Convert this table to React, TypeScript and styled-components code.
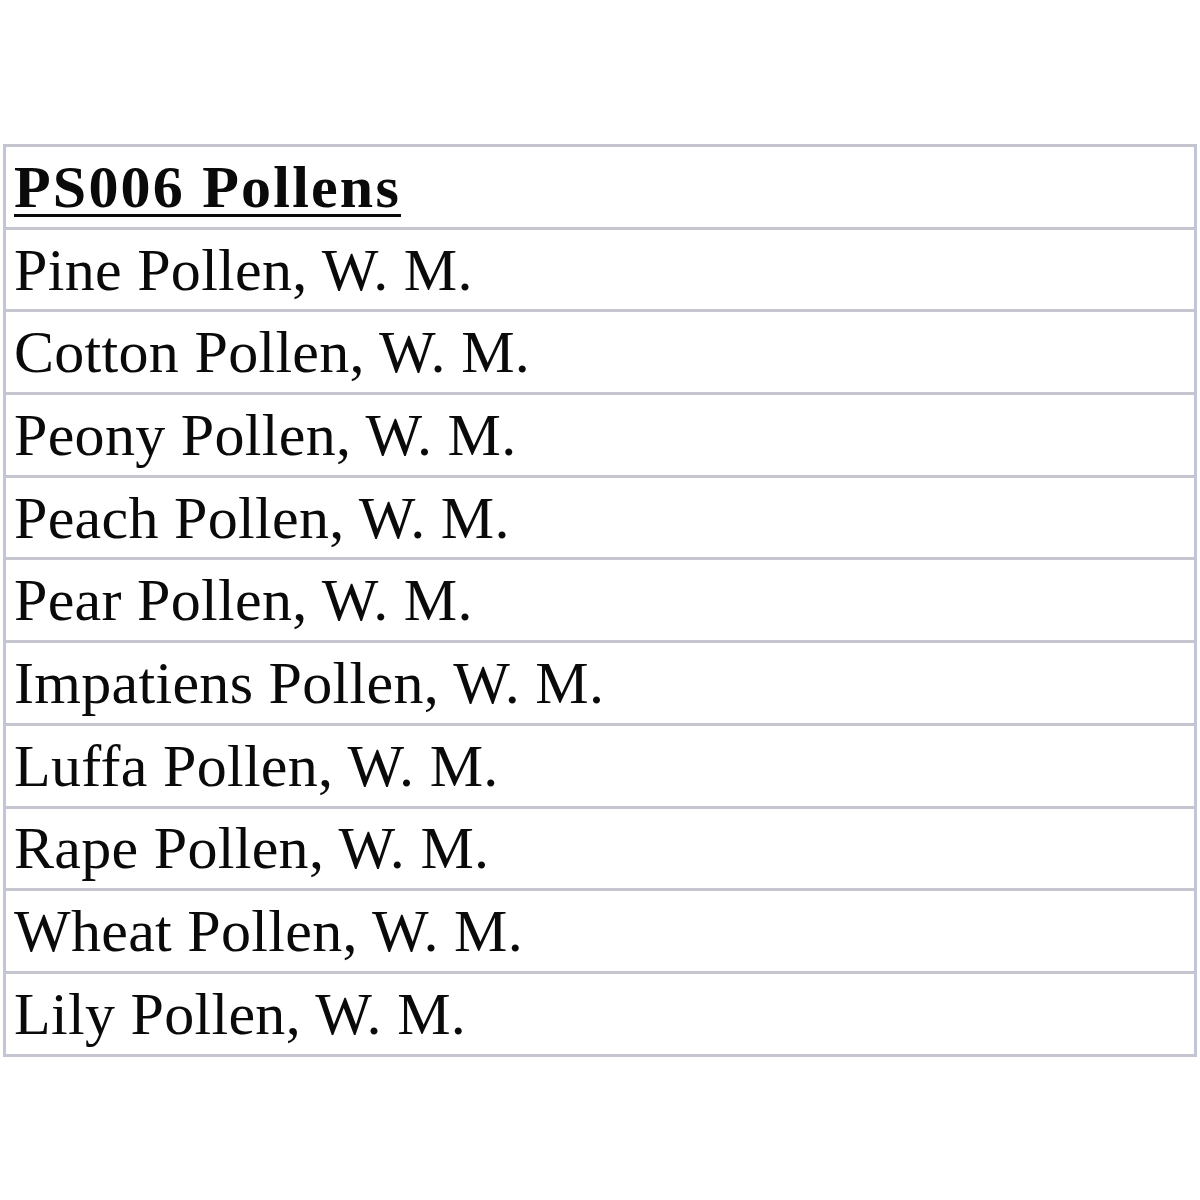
import React from 'react';
import styled, { createGlobalStyle } from 'styled-components';

const GlobalStyle = createGlobalStyle`
  html, body {
    margin: 0;
    padding: 0;
    background: #ffffff;
  }
`;

const Page = styled.div`
  width: 1200px;
  height: 1200px;
  padding-top: 144px;
  box-sizing: border-box;
  background: #ffffff;
`;

const Table = styled.div`
  margin-left: 3px;
  width: 1194px;
  box-sizing: border-box;
  border-top: 3px solid #c3c4ce;
  border-left: 3px solid #c2c5d8;
  border-right: 3px solid #c2c5d8;
  display: grid;
  grid-auto-rows: 82.7px;
`;

const Row = styled.div`
  display: flex;
  align-items: center;
  box-sizing: border-box;
  border-bottom: 3px solid #c4c5ce;
  padding: 0 0 0 8px;
  font-family: "Liberation Serif", "Times New Roman", serif;
  font-size: 60px;
  color: #0a0a0a;
  line-height: 1;
  letter-spacing: 0.3px;
  white-space: nowrap;
`;

const Heading = styled.span`
  font-weight: bold;
  text-decoration: underline;
  text-decoration-thickness: 3px;
  text-underline-offset: 7px;
  letter-spacing: 2.2px;
`;

const items = [
  'Pine Pollen, W. M.',
  'Cotton Pollen, W. M.',
  'Peony Pollen, W. M.',
  'Peach Pollen, W. M.',
  'Pear Pollen, W. M.',
  'Impatiens Pollen, W. M.',
  'Luffa Pollen, W. M.',
  'Rape Pollen, W. M.',
  'Wheat Pollen, W. M.',
  'Lily Pollen, W. M.',
];

export default function App() {
  return (
    <>
      <GlobalStyle />
      <Page>
        <Table>
          <Row>
            <Heading>PS006 Pollens</Heading>
          </Row>
          {items.map(item => (
            <Row key={item}>{item}</Row>
          ))}
        </Table>
      </Page>
    </>
  );
}
